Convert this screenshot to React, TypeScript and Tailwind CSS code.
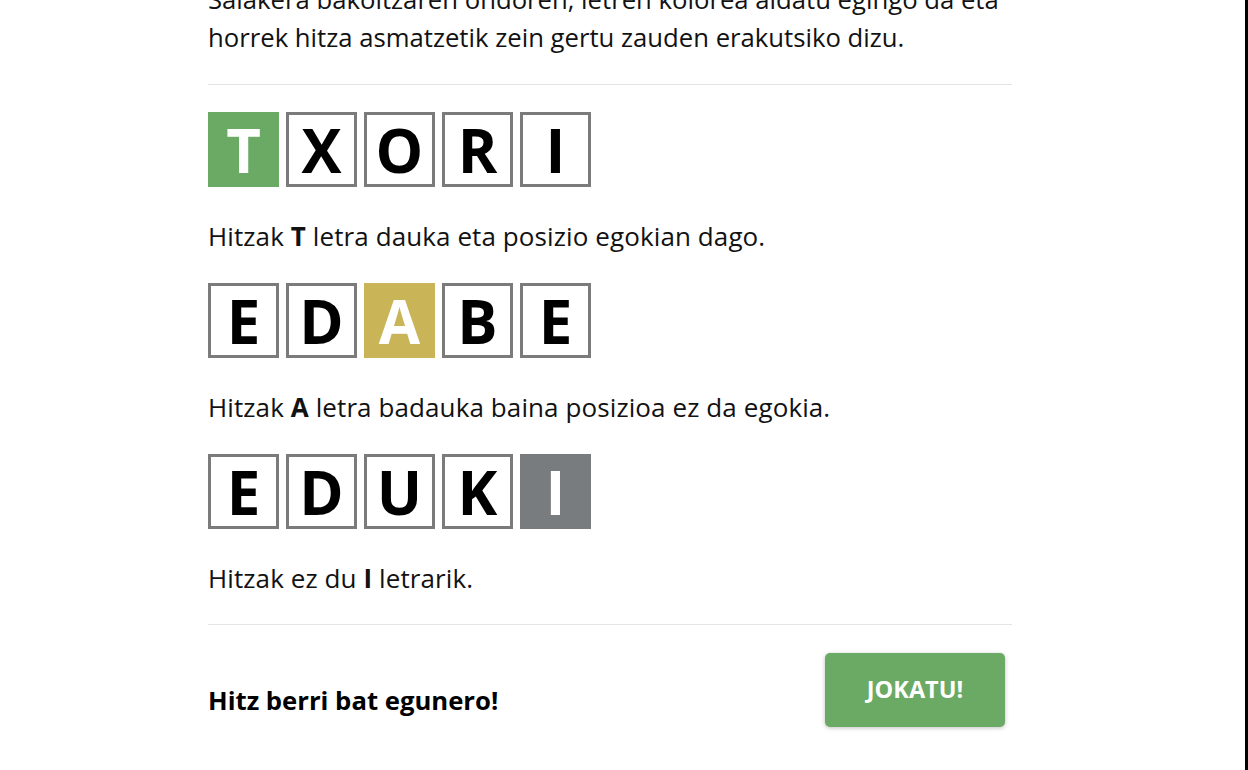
type TileState = "correct" | "present" | "absent" | "empty";

const tileStyles: Record<TileState, string> = {
  correct: "bg-[#6aaa64] text-white",
  present: "bg-[#c9b458] text-white",
  absent: "bg-[#787c7e] text-white",
  empty: "bg-white text-black border-[3px] border-[#7b7b7b]",
};

function Tile({ letter, state }: { letter: string; state: TileState }) {
  return (
    <div
      className={`w-[71px] h-[75px] flex items-center justify-center text-[60px] font-bold leading-none ${tileStyles[state]}`}
    >
      {letter}
    </div>
  );
}

function Example({
  word,
  highlight,
  state,
  children,
}: {
  word: string;
  highlight: number;
  state: TileState;
  children: React.ReactNode;
}) {
  return (
    <div>
      <div className="flex gap-[7px]">
        {word.split("").map((l, i) => (
          <Tile key={i} letter={l} state={i === highlight ? state : "empty"} />
        ))}
      </div>
      <p className="mt-[34px] mb-[32px] text-[26px] leading-[30px] tracking-[0.1px]">{children}</p>
    </div>
  );
}

export default function App() {
  return (
    <div
      className="h-[770px] overflow-hidden bg-white text-[#121213] border-r-[3px] border-black"
      style={{ fontFamily: '"Open Sans", "Noto Sans", sans-serif' }}
    >
      <div className="w-[804px] ml-[208px] -mt-[19px]">
        <p className="text-[25.7px] leading-[38px]">
          Saiakera bakoitzaren ondoren, letren kolorea aldatu egingo da eta
          <br />
          horrek hitza asmatzetik zein gertu zauden erakutsiko dizu.
        </p>
        <hr className="mt-[27px] mb-[27px] border-t border-[#e3e3e8]" />
        <Example word="TXORI" highlight={0} state="correct">
          Hitzak <b>T</b> letra dauka eta posizio egokian dago.
        </Example>
        <Example word="EDABE" highlight={2} state="present">
          Hitzak <b>A</b> letra badauka baina posizioa ez da egokia.
        </Example>
        <Example word="EDUKI" highlight={4} state="absent">
          Hitzak ez du <b>I</b> letrarik.
        </Example>
        <hr className="-mt-[1px] border-t border-[#e3e3e8]" />
        <div className="flex justify-between pr-[7px] mt-[28px]">
          <div className="pt-[33px] text-[25.7px] font-bold text-black leading-[30px]">
            Hitz berri bat egunero!
          </div>
          <button className="w-[180px] h-[74px] rounded-[5px] bg-[#6aaa64] text-white font-bold text-[23.5px] shadow-[0_1px_4px_rgba(0,0,0,0.25)]">
            JOKATU!
          </button>
        </div>
      </div>
    </div>
  );
}
